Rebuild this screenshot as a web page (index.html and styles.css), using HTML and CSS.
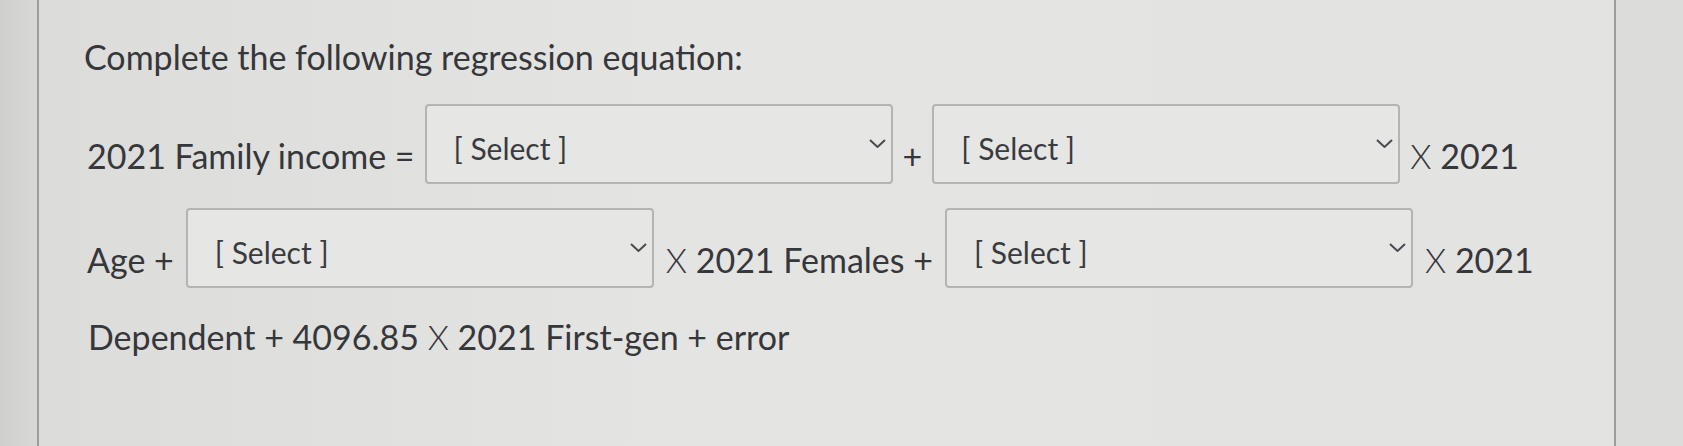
FILE: index.html
```html
<!DOCTYPE html>
<html>
<head>
<meta charset="utf-8">
<link rel="stylesheet" href="styles.css">
</head>
<body>
<div class="page">
  <div class="panel">
    <p class="title">Complete the following regression equation:</p>
    <div class="row row-1">
      <span class="lbl">2021 Family income =</span>
      <div class="sel"><span>[ Select ]</span><svg class="chev" viewBox="0 0 17 9"><path d="M1 1 L8.5 8 L16 1"/></svg></div>
      <span class="lbl">+</span>
      <div class="sel"><span>[ Select ]</span><svg class="chev" viewBox="0 0 17 9"><path d="M1 1 L8.5 8 L16 1"/></svg></div>
      <span class="lbl"><span class="x">X</span> 2021</span>
    </div>
    <div class="row row-2">
      <span class="lbl">Age +</span>
      <div class="sel"><span>[ Select ]</span><svg class="chev" viewBox="0 0 17 9"><path d="M1 1 L8.5 8 L16 1"/></svg></div>
      <span class="lbl"><span class="x">X</span> 2021 Females +</span>
      <div class="sel"><span>[ Select ]</span><svg class="chev" viewBox="0 0 17 9"><path d="M1 1 L8.5 8 L16 1"/></svg></div>
      <span class="lbl"><span class="x">X</span> 2021</span>
    </div>
    <p class="last">Dependent + 4096.85 <span class="x">X</span> 2021 First-gen + error</p>
  </div>
</div>
</body>
</html>
```
FILE: styles.css
```css
html, body {
  margin: 0;
  padding: 0;
}
body {
  width: 1683px;
  height: 446px;
  overflow: hidden;
  background: linear-gradient(90deg, #cfcfcd 0px, #d8d8d6 37px, #dcdcda 1683px);
  font-family: Lato, "Open Sans", sans-serif;
  color: #36373b;
}
.page {
  padding-left: 37px;
  height: 446px;
}
.panel {
  width: 1579px;
  height: 446px;
  box-sizing: border-box;
  border-left: 2px solid #9c9c9a;
  border-right: 2px solid #9c9c9a;
  background: linear-gradient(90deg, #dcdcda 0%, #e4e4e2 40%, #e3e3e1 100%);
  padding: 36px 0 0 48px;
}
.title {
  margin: 0 0 0 -3px;
  font-size: 34px;
  line-height: 41px;
}
.row {
  display: flex;
  align-items: center;
  gap: 10px;
  height: 80px;
}
.row-1 {
  margin-top: 27px;
}
.row-2 {
  margin-top: 24px;
  gap: 12px;
}
.lbl {
  font-size: 34px;
  line-height: 41px;
  padding-top: 22px;
  white-space: nowrap;
}
.x {
  font-weight: 300;
}
.sel {
  width: 468px;
  height: 80px;
  box-sizing: border-box;
  border: 2px solid #b4b4b2;
  border-radius: 4px;
  background: #e6e6e4;
  display: flex;
  align-items: center;
  justify-content: space-between;
  padding: 6px 5px 0 27px;
  font-size: 30px;
  color: #3a3b40;
}
.sel span {
  padding-top: 2px;
}
.chev {
  width: 17px;
  height: 9px;
  margin-bottom: 8px;
  fill: none;
  stroke: #4a4b50;
  stroke-width: 2;
}
.last {
  margin: 28px 0 0 1px;
  font-size: 34px;
  line-height: 41px;
}
```
